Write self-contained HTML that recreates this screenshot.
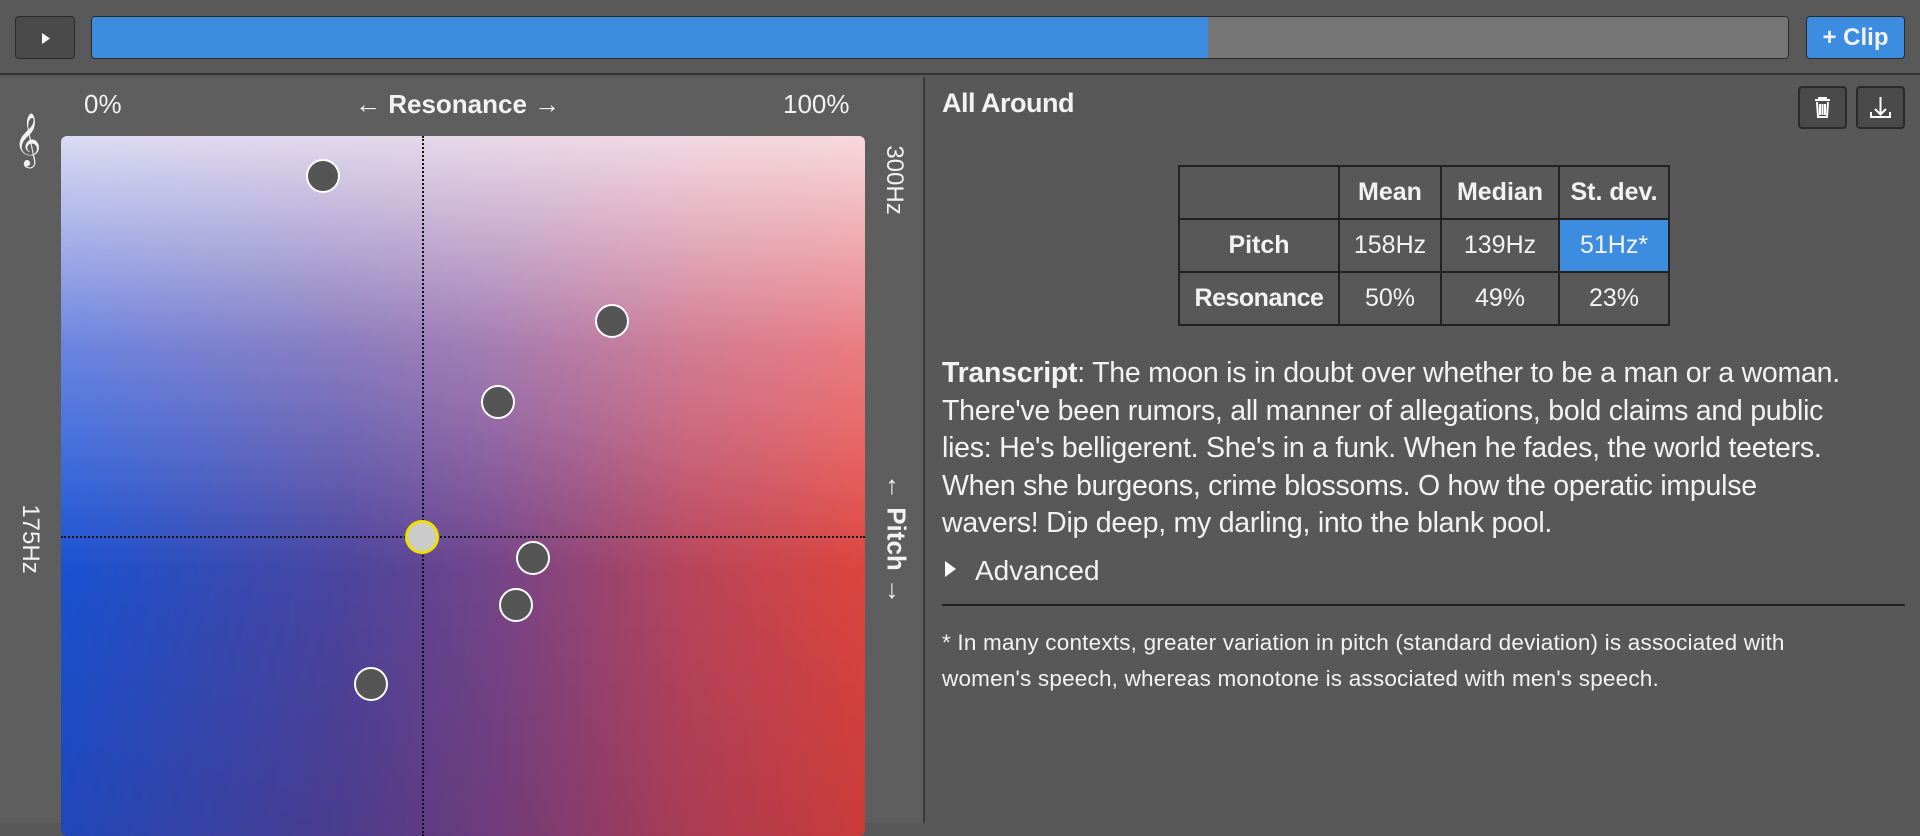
<!DOCTYPE html>
<html><head><meta charset="utf-8"><style>
*{margin:0;padding:0;box-sizing:border-box}
body{width:1920px;height:823px;overflow:hidden;background:#585858;font-family:"Liberation Sans",sans-serif;color:#f2f2f2;position:relative}
.abs{position:absolute}
#top{left:0;top:0;width:1920px;height:75px;background:#595959;border-bottom:2px solid #333}
#play{left:15px;top:16px;width:60px;height:43px;background:#4a4a4a;border:1px solid #2a2a2a;border-radius:4px}
#bar{left:91px;top:16px;width:1698px;height:43px;background:#757575;border:1px solid #2a2a2a;border-radius:4px;overflow:hidden}
#fill{left:0;top:0;width:1116px;height:100%;background:#3c8ddf}
#clip{left:1806px;top:16px;width:99px;height:43px;background:#3c8ddf;border:1px solid #2a2a2a;border-radius:4px;font-weight:bold;font-size:24px;line-height:41px;text-align:center}
#left{left:0;top:77px;width:925px;height:746px;background:#5e5e5e;border-right:2px solid #3a3a3a}
#plot{left:61px;top:136px;width:804px;height:700px;border-radius:6px;
background:linear-gradient(to bottom,rgba(248,236,244,.88) 0%,rgba(235,200,225,.4) 30%,rgba(220,180,220,0) 62%),linear-gradient(to bottom,rgba(80,0,30,0) 40%,rgba(80,0,30,.2) 100%),linear-gradient(to right,#1458e0 0%,#4a4aa8 35%,#7a4a90 55%,#c04a60 78%,#e84a40 100%)}
.dot{position:absolute;width:34px;height:34px;margin:-17px 0 0 -17px;border-radius:50%;background:#555;border:2px solid #fff}
.t{position:absolute;white-space:nowrap}
table{position:absolute;left:1178px;top:165px;border-collapse:collapse;font-size:25px}
td{border:2px solid #222;height:53px;text-align:center;padding:0 6px}
</style></head><body>
<div id="top" class="abs"></div>
<div id="play" class="abs"><svg width="60" height="43"><polygon points="26,16 34,21.5 26,27" fill="#fff"/></svg></div>
<div id="bar" class="abs"><div id="fill" class="abs"></div></div>
<div id="clip" class="abs">+ Clip</div>
<div id="left" class="abs"></div>
<div class="t" style="left:84px;top:89px;font-size:26px">0%</div>
<div class="t" style="left:355px;top:89px;font-size:26px;font-weight:bold">← Resonance →</div>
<div class="t" style="left:783px;top:89px;font-size:26px">100%</div>
<div class="t" style="left:14px;top:112px;font-size:46px">𝄞</div>
<div id="plot" class="abs">
<div class="abs" style="left:361px;top:0;height:700px;border-left:2px dotted #111"></div>
<div class="abs" style="left:0;top:400px;width:804px;border-top:2px dotted #111"></div>
<div class="dot" style="left:262px;top:40px"></div>
<div class="dot" style="left:551px;top:185px"></div>
<div class="dot" style="left:437px;top:266px"></div>
<div class="dot" style="left:472px;top:422px"></div>
<div class="dot" style="left:455px;top:469px"></div>
<div class="dot" style="left:310px;top:548px"></div>
<div class="dot" style="left:361px;top:401px;background:#ccc;border:3px solid #f0e000"></div>
</div>
<div class="t" style="top:180px;font-size:24px;transform:translate(-50%,-50%) rotate(90deg);left:894px">300Hz</div>
<div class="t" style="left:30px;top:539px;font-size:24px;transform:translate(-50%,-50%) rotate(90deg)">175Hz</div>
<div class="t" style="left:896px;top:539px;font-size:26px;font-weight:bold;transform:translate(-50%,-50%) rotate(90deg)">← Pitch →</div>
<div class="t" style="left:942px;top:88px;font-size:27px;font-weight:bold;letter-spacing:-0.5px">All Around</div>
<div class="abs" style="left:1798px;top:86px;width:49px;height:43px;background:#4a4a4a;border:2px solid #2a2a2a;border-radius:4px"><svg width="45" height="39"><g fill="none" stroke="#fff" stroke-width="2"><path d="M15 12h15M19 12v-2h7v2M17 14l1 15h9l1-15M20 16v11M22.5 16v11M25 16v11"/></g></svg></div>
<div class="abs" style="left:1856px;top:86px;width:49px;height:43px;background:#4a4a4a;border:2px solid #2a2a2a;border-radius:4px"><svg width="45" height="39"><g fill="none" stroke="#fff" stroke-width="2"><path d="M22.5 9v17M17 21l5.5 5.5L28 21M13 24v5h19v-5"/></g></svg></div>
<table>
<tr><td style="width:160px"></td><td style="width:102px;font-weight:bold">Mean</td><td style="width:118px;font-weight:bold">Median</td><td style="width:110px;font-weight:bold">St. dev.</td></tr>
<tr><td style="font-weight:bold">Pitch</td><td>158Hz</td><td>139Hz</td><td style="background:#3c8ddf">51Hz*</td></tr>
<tr><td style="font-weight:bold;letter-spacing:-0.5px">Resonance</td><td>50%</td><td>49%</td><td>23%</td></tr>
</table>
<div class="t" style="left:942px;top:355px;font-size:28.5px;line-height:37.5px;letter-spacing:-0.25px"><b>Transcript</b>: The moon is in doubt over whether to be a man or a woman.<br>There've been rumors, all manner of allegations, bold claims and public<br>lies: He's belligerent. She's in a funk. When he fades, the world teeters.<br>When she burgeons, crime blossoms. O how the operatic impulse<br>wavers! Dip deep, my darling, into the blank pool.</div>
<svg class="abs" style="left:944px;top:559px" width="14" height="20"><polygon points="1,2 12,10 1,18" fill="#fff"/></svg>
<div class="t" style="left:975px;top:555px;font-size:28px">Advanced</div>
<div class="abs" style="left:942px;top:604px;width:963px;border-top:2px solid #222"></div>
<div class="t" style="left:942px;top:625px;font-size:22.5px;line-height:36px;letter-spacing:0.2px">* In many contexts, greater variation in pitch (standard deviation) is associated with<br>women's speech, whereas monotone is associated with men's speech.</div>
</body></html>
